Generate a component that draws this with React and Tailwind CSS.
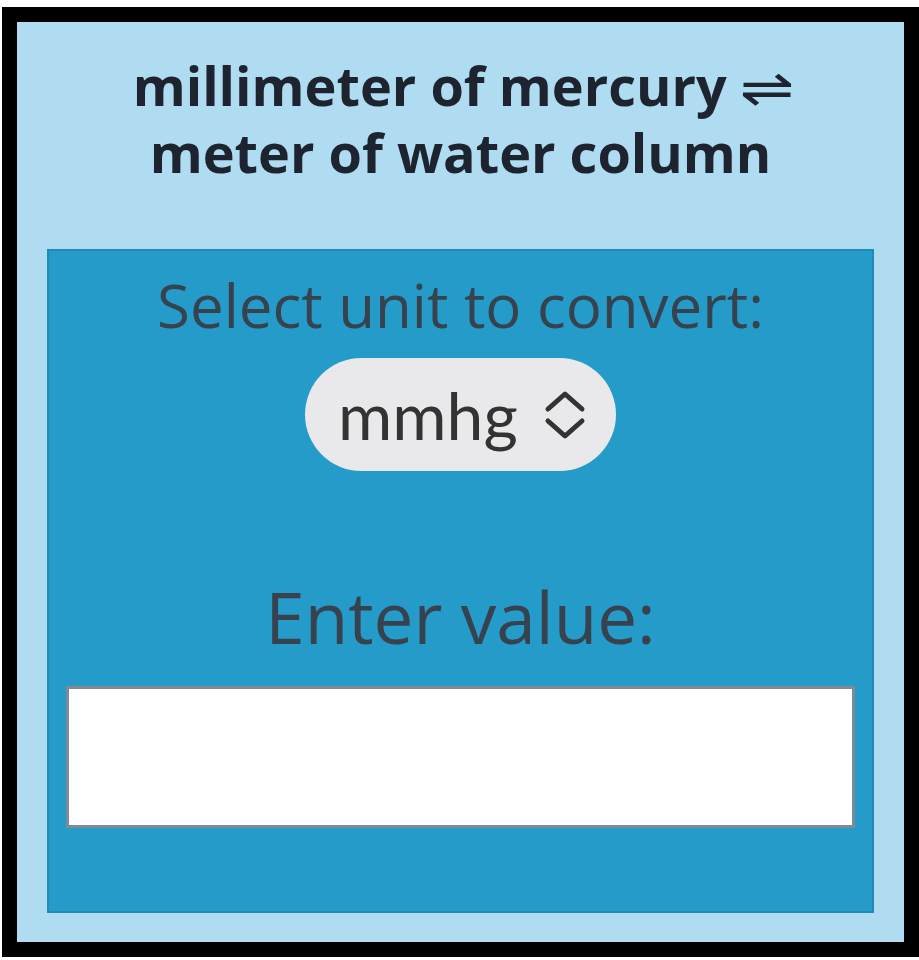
import { useState } from "react";

function UpDown() {
  return (
    <svg width="42" height="50" viewBox="0 0 42 50" fill="none" stroke="#333" strokeWidth="5" strokeLinecap="round" strokeLinejoin="round">
      <path d="M4 19 L21 4 L38 19" />
      <path d="M4 31 L21 46 L38 31" />
    </svg>
  );
}

export default function App() {
  const [value, setValue] = useState("");

  return (
    <div className="bg-white w-[919px] h-[960px] pt-[7px] pl-[2px]">
      <div className="w-[917px] h-[950px] border-[15px] border-black bg-[#afdcf0] px-[30px] pt-[30px] font-['Open_Sans',sans-serif]">
        <h1 className="text-center font-bold text-[54px] leading-[67px] h-[134px] text-[#1e2330]">
          millimeter of mercury{" "}
          <span className="inline-block leading-none scale-x-125 ml-[4px] font-normal font-['DejaVu_Sans',sans-serif] text-[52px] text-[#1e2330]">⇌</span>
          <br />
          meter of water column
        </h1>
        <div className="mt-[63px] h-[664px] bg-[#259bc9] border-2 border-[#2389b5] flex flex-col items-center pt-[18px] px-[17px]">
          <p className="text-[60px] leading-[72px] text-[#37424f]">Select unit to convert:</p>
          <div className="mt-[17px] h-[113px] w-[311px] rounded-full bg-[#e9e9eb] flex items-center pl-[33px] gap-[26px]">
            <span className="font-['Lato',sans-serif] text-[66px] text-[#333]">mmhg</span>
            <UpDown />
          </div>
          <p className="mt-[103px] text-[71px] leading-[85px] text-[#37424f]">Enter value:</p>
          <input
            className="mt-[27px] w-full h-[142px] bg-white border-[3px] border-[#7f8a96] outline-none px-4 text-4xl"
            value={value}
            onChange={(e) => setValue(e.target.value)}
          />
        </div>
      </div>
    </div>
  );
}
